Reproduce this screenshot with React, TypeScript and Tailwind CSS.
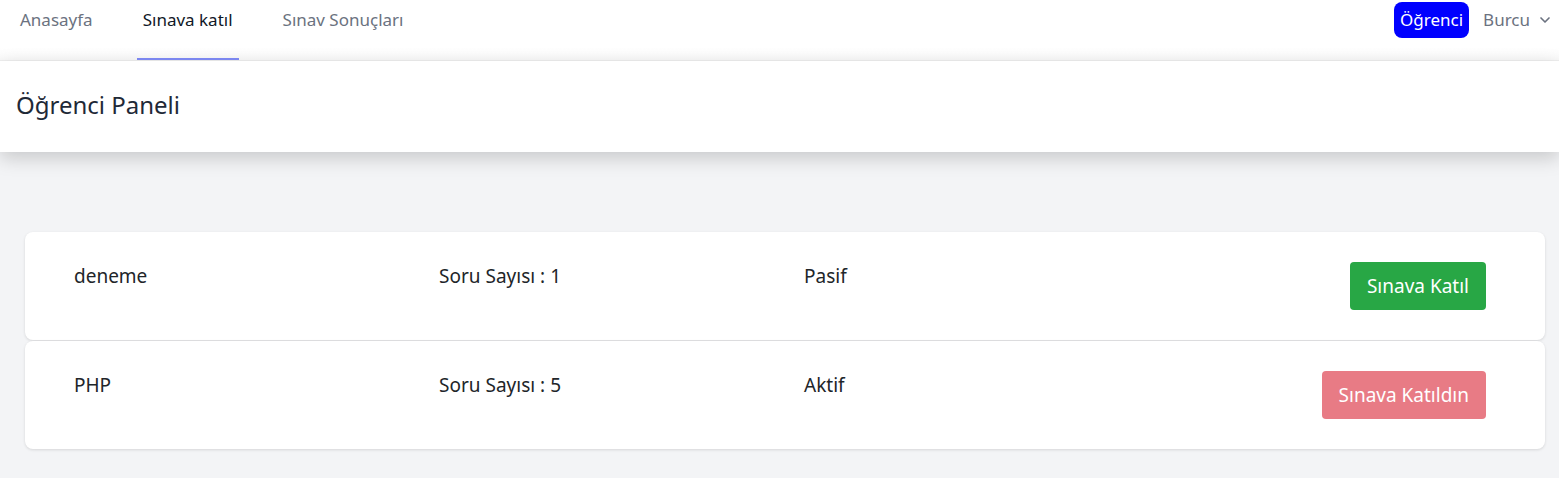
import { ChevronDown } from "lucide-react";

const exams = [
    { name: "deneme", count: 1, status: "Pasif", joined: false },
    { name: "PHP", count: 5, status: "Aktif", joined: true },
];

const navLinks = [
    { name: "Anasayfa", active: false },
    { name: "Sınava katıl", active: true },
    { name: "Sınav Sonuçları", active: false },
];

const App = () => {
    return (
        <div className="min-h-[478px] bg-[#f3f4f6] font-['Noto_Sans',sans-serif]">
            {/* Top nav */}
            <nav className="h-[61px] flex justify-between bg-gradient-to-b from-white from-80% to-[#fafafa] border-b border-[#f0f0f0]">
                <div className="flex gap-10 pl-4">
                    {navLinks.map((link) => (
                        <a
                            key={link.name}
                            href="#"
                            className={
                                link.active
                                    ? "px-1.5 pt-[7px] text-[17px] text-[#111827] border-b-2 border-[#818cf8]"
                                    : "px-1 pt-[7px] text-[17px] text-[#6b7280] border-b-2 border-transparent"
                            }
                        >
                            {link.name}
                        </a>
                    ))}
                </div>
                <div className="flex items-start pt-[2px] pr-[6px]">
                    <span className="h-9 px-[6px] flex items-center rounded-lg bg-[#0000ff] text-white text-[17px]">
                        Öğrenci
                    </span>
                    <button className="ml-[14px] h-9 flex items-center gap-[7px] text-[17px] text-[#6b7280]">
                        Burcu
                        <ChevronDown className="w-4 h-4" strokeWidth={2.5} />
                    </button>
                </div>
            </nav>

            {/* Page header */}
            <header className="bg-white h-[91px] flex items-center px-4 pb-1 shadow-[0_6px_18px_rgba(0,0,0,0.18)] relative">
                <h2 className="text-[24px] text-[#1f2937]">Öğrenci Paneli</h2>
            </header>

            {/* Exam list */}
            <main className="pt-[80px] pl-[25px] pr-[14px] pb-7">
                {exams.map((exam) => (
                    <div
                        key={exam.name}
                        className="bg-white rounded-lg shadow-[0_1px_3px_rgba(0,0,0,0.12)] mb-px h-[108px] pl-[49px] pr-[59px] pt-[30px] flex items-start text-[19px] text-[#212529]"
                    >
                        <div className="w-[365px] leading-[28px]">{exam.name}</div>
                        <div className="w-[365px] leading-[28px]">Soru Sayısı : {exam.count}</div>
                        <div className="w-[365px] leading-[28px]">{exam.status}</div>
                        <div className="flex-1 flex justify-end">
                            {exam.joined ? (
                                <button className="h-12 px-[17px] rounded-[4px] bg-[#dc3545] opacity-65 text-white text-[19px]">
                                    Sınava Katıldın
                                </button>
                            ) : (
                                <button className="h-12 px-[17px] rounded-[4px] bg-[#28a745] text-white text-[19px]">
                                    Sınava Katıl
                                </button>
                            )}
                        </div>
                    </div>
                ))}
            </main>
        </div>
    );
};

export default App;
